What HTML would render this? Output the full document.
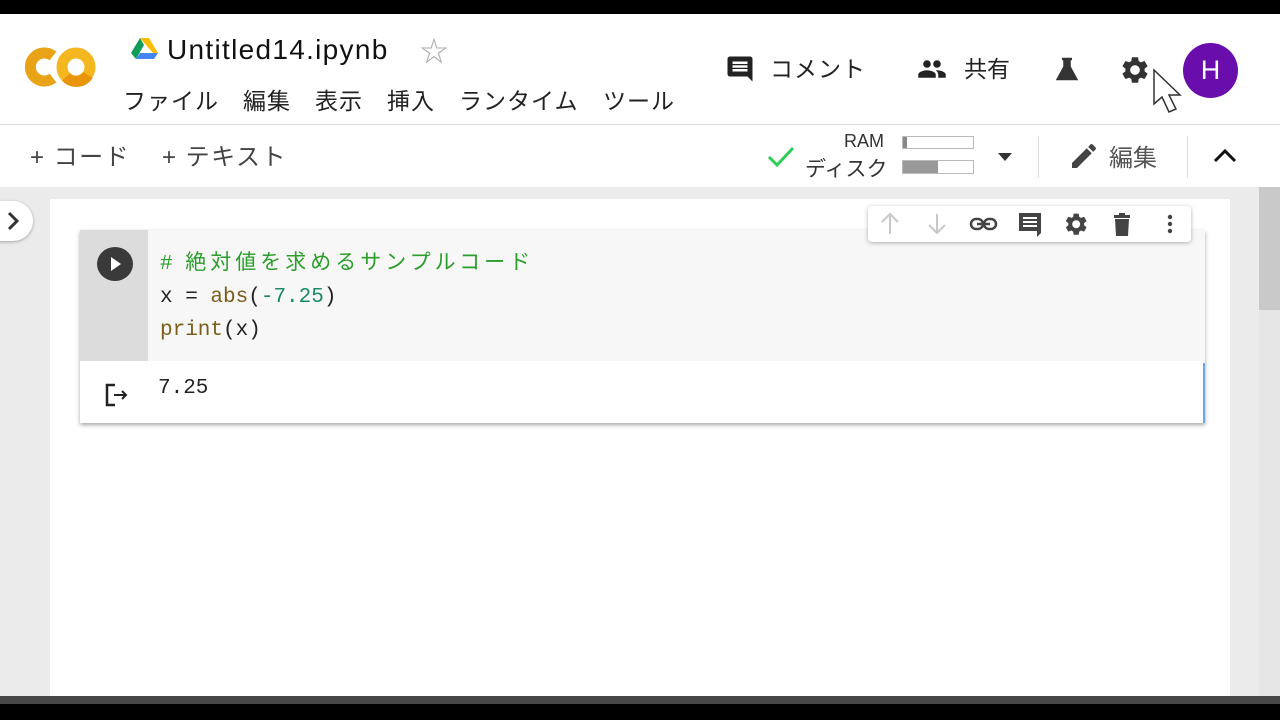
<!DOCTYPE html>
<html><head><meta charset="utf-8"><style>
*{margin:0;padding:0;box-sizing:border-box}
body{width:1280px;height:720px;overflow:hidden;background:#ebebeb;font-family:"Liberation Sans","Noto Sans CJK JP",sans-serif;position:relative;color:#202124}
.abs{position:absolute}
.mono{font-family:"Liberation Mono","Noto Sans CJK JP",monospace}
.m{position:absolute;top:82px;font-size:23px;color:#222;letter-spacing:1px}
.j{letter-spacing:4px}
</style></head><body>
<div class="abs" style="left:0;top:0;width:1280px;height:14px;background:#000"></div>
<div class="abs" style="left:0;top:14px;width:1280px;height:111px;background:#fff;border-bottom:1px solid #dadada"></div>
<div class="abs" style="left:0;top:125px;width:1280px;height:62px;background:#fff"></div>
<!-- logo -->
<svg class="abs" style="left:24px;top:44px" width="74" height="46" viewBox="0 0 74 46">
<path d="M29 12 A14 14 0 1 0 29 34" fill="none" stroke="#e8a317" stroke-width="11"/>
<circle cx="52" cy="23" r="14" fill="none" stroke="#f5b71f" stroke-width="11"/>
<path d="M42 33 A14 14 0 0 0 64 31" fill="none" stroke="#e8950c" stroke-width="11"/>
</svg>
<!-- drive -->
<svg class="abs" style="left:131px;top:38px" width="27" height="22" viewBox="0 0 27 22">
<polygon points="9,0 18,0 27,15 22,15" fill="#fbbc04"/>
<polygon points="9,0 13,7 5,21 0,15" fill="#0f9d58"/>
<polygon points="5,21 9,15 27,15 23,21" fill="#4285f4"/>
</svg>
<div class="abs" style="left:167px;top:34px;font-size:28px;color:#111;letter-spacing:1.3px">Untitled14.ipynb</div>
<div class="abs" style="left:420px;top:30px;font-size:28px;color:#aaa">☆</div>
<div class="m" style="left:123px">ファイル</div>
<div class="m" style="left:243px">編集</div>
<div class="m" style="left:315px">表示</div>
<div class="m" style="left:387px">挿入</div>
<div class="m" style="left:459px">ランタイム</div>
<div class="m" style="left:603px">ツール</div>
<!-- right header -->
<svg class="abs" style="left:725px;top:54px" width="30" height="30" viewBox="0 0 24 24"><path fill="#222" d="M21.99 4c0-1.1-.89-2-1.99-2H4c-1.1 0-2 .9-2 2v12c0 1.1.9 2 2 2h14l4 4-.01-18zM18 14H6v-2h12v2zm0-3H6V9h12v2zm0-3H6V6h12v2z"/></svg>
<div class="abs" style="left:770px;top:50px;font-size:23px;color:#222;letter-spacing:1px">コメント</div>
<svg class="abs" style="left:915px;top:54px" width="34" height="30" viewBox="0 0 24 24"><path fill="#222" d="M16 11c1.66 0 2.99-1.34 2.99-3S17.66 5 16 5c-1.66 0-3 1.34-3 3s1.34 3 3 3zm-8 0c1.66 0 2.99-1.34 2.99-3S9.66 5 8 5C6.34 5 5 6.34 5 8s1.34 3 3 3zm0 2c-2.33 0-7 1.17-7 3.5V19h14v-2.5c0-2.33-4.670-3.5-7-3.5zm8 0c-.29 0-.62.02-.97.05 1.16.84 1.97 1.97 1.97 3.45V19h6v-2.5c0-2.33-4.67-3.5-7-3.5z"/></svg>
<div class="abs" style="left:964px;top:50px;font-size:23px;color:#222">共有</div>
<svg class="abs" style="left:1052px;top:54px" width="30" height="30" viewBox="0 0 24 24"><path fill="#333" d="M8 3h8v2h-1v5l6 11H3l6-11V5H8z"/></svg>
<svg class="abs" style="left:1119px;top:54px" width="32" height="32" viewBox="0 0 24 24"><path fill="#333" d="M19.14 12.94c.04-.3.06-.61.06-.94 0-.32-.02-.64-.07-.94l2.03-1.58a.49.49 0 0 0 .12-.61l-1.92-3.32a.488.488 0 0 0-.59-.22l-2.39.96c-.5-.38-1.03-.7-1.62-.94l-.36-2.54a.484.484 0 0 0-.48-.41h-3.84c-.24 0-.43.17-.47.41l-.36 2.54c-.59.24-1.13.57-1.62.94l-2.39-.96c-.22-.08-.47 0-.59.22L2.74 8.87c-.12.21-.08.47.12.61l2.03 1.58c-.05.3-.09.63-.09.94s.02.64.07.94l-2.03 1.58a.49.49 0 0 0-.12.61l1.92 3.32c.12.22.37.29.59.22l2.39-.96c.5.38 1.03.7 1.62.94l.36 2.54c.05.24.24.41.48.41h3.84c.24 0 .44-.17.47-.41l.36-2.54c.59-.24 1.13-.56 1.62-.94l2.39.96c.22.08.47 0 .59-.22l1.92-3.32c.12-.22.07-.47-.12-.61l-2.01-1.58zM12 15.6c-1.98 0-3.6-1.62-3.6-3.6s1.62-3.6 3.6-3.6 3.6 1.62 3.6 3.6-1.62 3.6-3.6 3.6z"/></svg>
<div class="abs" style="left:1183px;top:43px;width:55px;height:55px;border-radius:50%;background:#6a0dad;color:#fff;font-size:27px;text-align:center;line-height:55px">H</div>
<svg class="abs" style="left:1152px;top:68px" width="40" height="54" viewBox="0 0 40 54"><path d="M2 2 L2 36 L10 29 L17 44 L24 41 L17 27 L28 27 Z" fill="#fff" stroke="#333" stroke-width="1.5"/></svg>
<!-- toolbar -->
<div class="abs" style="left:30px;top:137px;font-size:24px;color:#444;letter-spacing:1.5px">+ コード</div>
<div class="abs" style="left:162px;top:137px;font-size:24px;color:#444;letter-spacing:1.5px">+ テキスト</div>
<svg class="abs" style="left:766px;top:144px" width="30" height="26" viewBox="0 0 30 26"><path d="M3 13 L11 21 L27 4" fill="none" stroke="#2bcf55" stroke-width="3"/></svg>
<div class="abs" style="left:844px;top:131px;font-size:18px;color:#333">RAM</div>
<div class="abs" style="left:805px;top:153px;font-size:21px;color:#333">ディスク</div>
<div class="abs" style="left:902px;top:136px;width:72px;height:13px;border:1px solid #bbb"><div style="width:4px;height:100%;background:#888"></div></div>
<div class="abs" style="left:902px;top:160px;width:72px;height:14px;border:1px solid #bbb"><div style="width:35px;height:100%;background:#999"></div></div>
<div class="abs" style="left:998px;top:153px;width:0;height:0;border-left:7px solid transparent;border-right:7px solid transparent;border-top:8px solid #333"></div>
<div class="abs" style="left:1038px;top:136px;width:1px;height:42px;background:#ddd"></div>
<svg class="abs" style="left:1068px;top:140px" width="32" height="32" viewBox="0 0 24 24"><path fill="#444" d="M3 17.25V21h3.75L17.81 9.94l-3.75-3.75L3 17.25zM20.71 7.04a1 1 0 0 0 0-1.41l-2.34-2.34a1 1 0 0 0-1.41 0l-1.83 1.83 3.75 3.75 1.83-1.83z"/></svg>
<div class="abs" style="left:1109px;top:138px;font-size:24px;color:#555">編集</div>
<div class="abs" style="left:1187px;top:136px;width:1px;height:42px;background:#ddd"></div>
<svg class="abs" style="left:1212px;top:146px" width="26" height="20" viewBox="0 0 26 20"><path d="M3 15 L13 5 L23 15" fill="none" stroke="#111" stroke-width="3"/></svg>
<!-- content -->
<div class="abs" style="left:50px;top:199px;width:1180px;height:497px;background:#fff"></div>
<div class="abs" style="left:1259px;top:187px;width:21px;height:509px;background:#e6e6e6"></div>
<div class="abs" style="left:1259px;top:187px;width:21px;height:123px;background:#c9c9c9"></div>
<div class="abs" style="left:-10px;top:201px;width:43px;height:40px;background:#fff;border-radius:0 20px 20px 0;box-shadow:0 1px 3px rgba(0,0,0,.3)"></div>
<svg class="abs" style="left:6px;top:210px" width="16" height="22" viewBox="0 0 16 22"><path d="M3 3 L11 11 L3 19" fill="none" stroke="#333" stroke-width="3"/></svg>
<!-- cell -->
<div class="abs" style="left:80px;top:230px;width:1125px;height:193px;background:#fff;box-shadow:0 2px 4px rgba(0,0,0,.35)"></div>
<div class="abs" style="left:80px;top:230px;width:68px;height:131px;background:#dcdcdc"></div>
<div class="abs" style="left:148px;top:230px;width:1057px;height:131px;background:#f7f7f7"></div>
<div class="abs" style="left:1203px;top:363px;width:2px;height:60px;background:#6aa6e8"></div>
<div class="abs" style="left:97px;top:247px;width:36px;height:34px;border-radius:50%;background:#3a3a3a"></div>
<div class="abs" style="left:111px;top:257px;width:0;height:0;border-top:7px solid transparent;border-bottom:7px solid transparent;border-left:10px solid #fff"></div>
<div class="abs mono" style="left:160px;top:248px;font-size:21px;line-height:33px;white-space:pre;color:#222"><span style="color:#2a9d2a"># <span class="j">絶対値を求めるサンプルコード</span></span>
x = <span style="color:#7c5d1a">abs</span>(<span style="color:#178a6a">-7.25</span>)
<span style="color:#7c5d1a">print</span>(x)</div>
<svg class="abs" style="left:104px;top:382px" width="28" height="26" viewBox="0 0 28 26"><path d="M11 3 H3 V23 H11" fill="none" stroke="#222" stroke-width="2.5"/><path d="M10 13 H22 M18 9 L22 13 L18 17" fill="none" stroke="#222" stroke-width="2"/></svg>
<div class="abs mono" style="left:158px;top:377px;font-size:21px;color:#222">7.25</div>
<!-- cell toolbar -->
<div class="abs" style="left:868px;top:206px;width:323px;height:36px;background:#fff;border-radius:4px;box-shadow:0 1px 4px rgba(0,0,0,.3)"></div>
<svg class="abs" style="left:876px;top:210px" width="310" height="28" viewBox="0 0 310 28">
<path d="M14 24 V5 M6 12 L14 4 L22 12" fill="none" stroke="#c8c8c8" stroke-width="2"/>
<path d="M61 4 V23 M53 15 L61 23 L69 15" fill="none" stroke="#c8c8c8" stroke-width="2"/>
<g fill="none" stroke="#444" stroke-width="2.5"><rect x="95" y="9" width="12" height="10" rx="5"/><rect x="108" y="9" width="12" height="10" rx="5"/><path d="M101 14 H114"/></g>
<path fill="#444" d="M143 3 H165 V23 L161 27 V21 H143 Z"/><path d="M147 8 H161 M147 12 H161 M147 16 H161" stroke="#fff" stroke-width="2"/>
<g transform="translate(187,1) scale(1.1)"><path fill="#444" d="M19.14 12.94c.04-.3.06-.61.06-.94 0-.32-.02-.64-.07-.94l2.03-1.58a.49.49 0 0 0 .12-.61l-1.92-3.32a.488.488 0 0 0-.59-.22l-2.39.96c-.5-.38-1.03-.7-1.62-.94l-.36-2.54a.484.484 0 0 0-.48-.41h-3.84c-.24 0-.43.17-.47.41l-.36 2.54c-.59.24-1.13.57-1.62.94l-2.39-.96c-.22-.08-.47 0-.59.22L2.74 8.87c-.12.21-.08.47.12.61l2.03 1.58c-.05.3-.09.63-.09.94s.02.64.07.94l-2.03 1.58a.49.49 0 0 0-.12.61l1.92 3.32c.12.22.37.29.59.22l2.39-.96c.5.38 1.03.7 1.62.94l.36 2.54c.05.24.24.41.48.41h3.840c.24 0 .44-.17.47-.41l.36-2.54c.59-.24 1.13-.56 1.62-.94l2.39.96c.22.08.47 0 .59-.22l1.92-3.32c.12-.22.07-.47-.12-.61l-2.01-1.58zM12 15.6c-1.98 0-3.6-1.62-3.6-3.6s1.62-3.6 3.6-3.6 3.6 1.62 3.6 3.6-1.62 3.6-3.6 3.6z"/></g>
<path fill="#444" d="M238 5 H254 V8 H238 Z M243 3 H249 V5 H243 Z M239 9 H253 L252 26 H240 Z"/>
<circle cx="294" cy="7" r="2.2" fill="#444"/><circle cx="294" cy="14" r="2.2" fill="#444"/><circle cx="294" cy="21" r="2.2" fill="#444"/>
</svg>
<div class="abs" style="left:0;top:696px;width:1280px;height:8px;background:#474747"></div>
<div class="abs" style="left:0;top:704px;width:1280px;height:16px;background:#000"></div>
</body></html>
